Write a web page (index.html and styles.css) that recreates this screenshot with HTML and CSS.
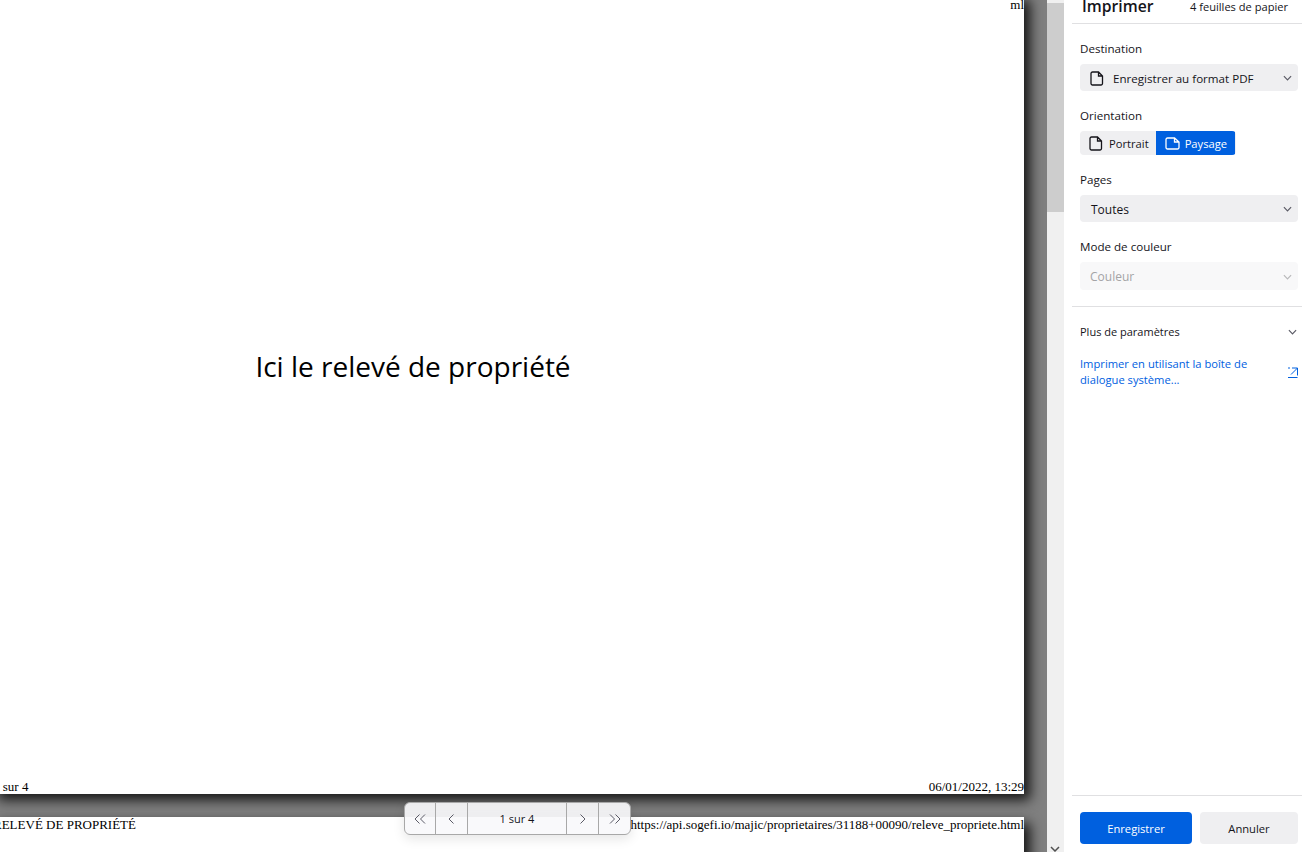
FILE: index.html
```html
<!DOCTYPE html>
<html lang="fr">
<head>
    <meta charset="UTF-8">
    <meta name="viewport" content="width=device-width, initial-scale=1.0">
    <title>Imprimer</title>
    <link rel="stylesheet" href="styles.css">
</head>
<body>
    <div class="preview">
        <div class="sheets">
            <div class="sheet">
                <div class="sheet-top">ml</div>
                <div class="sheet-body">Ici le relevé de propriété</div>
                <div class="sheet-line">
                    <span>1 sur 4</span>
                    <span>06/01/2022, 13:29</span>
                </div>
            </div>
            <div class="sheet">
                <div class="sheet-line">
                    <span>RELEVÉ DE PROPRIÉTÉ</span>
                    <span>https://api.sogefi.io/majic/proprietaires/31188+00090/releve_propriete.html</span>
                </div>
            </div>
        </div>
        <div class="scrollbar">
            <div class="scroll-thumb"></div>
            <svg class="scroll-down" width="10" height="6" viewBox="0 0 10 6"><path d="M1 1l4 4 4-4" fill="none" stroke="#505050" stroke-width="1.5"/></svg>
        </div>
        <div class="pager">
            <div class="pager-btn"><svg width="12" height="10" viewBox="0 0 12 10"><path d="M5.5 .5L1 5l4.5 4.5M11 .5L6.500 5l4.500 4.500" class="pager-ico"/></svg></div>
            <div class="pager-btn"><svg width="7" height="10" viewBox="0 0 7 10"><path d="M5.500 .5L1 5l4.500 4.500" class="pager-ico"/></svg></div>
            <div class="pager-num">1 sur 4</div>
            <div class="pager-btn"><svg width="7" height="10" viewBox="0 0 7 10"><path d="M1.500 .5L6 5l-4.500 4.500" class="pager-ico"/></svg></div>
            <div class="pager-btn"><svg width="12" height="10" viewBox="0 0 12 10"><path d="M1 .5L5.500 5 1 9.500M6.500 .5L11 5l-4.500 4.500" class="pager-ico"/></svg></div>
        </div>
    </div>

    <div class="panel">
        <div class="panel-head">
            <h1>Imprimer</h1>
            <span>4 feuilles de papier</span>
        </div>
        <div class="panel-main">
            <div class="field">
                <div class="label">Destination</div>
                <div class="select select-dest">
                    <svg width="14" height="15" viewBox="0 0 14 15"><path d="M2.500 1h6l4 4v7.500a1.500 1.500 0 0 1-1.500 1.500H2.500A1.500 1.500 0 0 1 1 12.500v-10A1.500 1.500 0 0 1 2.500 1zM8.500 1v4h4" class="page-ico"/></svg>
                    <span>Enregistrer au format PDF</span>
                    <svg class="chev" width="9" height="6" viewBox="0 0 10 6"><path d="M1 1l4 4 4-4"/></svg>
                </div>
            </div>
            <div class="field">
                <div class="label">Orientation</div>
                <div class="toggle">
                    <div class="toggle-opt">
                        <svg width="14" height="15" viewBox="0 0 14 15"><path d="M2.500 1h6l4 4v7.500a1.500 1.500 0 0 1-1.500 1.500H2.500A1.500 1.500 0 0 1 1 12.500v-10A1.500 1.500 0 0 1 2.500 1zM8.500 1v4h4" class="page-ico"/></svg>
                        Portrait
                    </div>
                    <div class="toggle-opt on">
                        <svg width="15" height="13" viewBox="0 0 15 13"><path d="M2.500 1h7l4.500 4v5.500a1.500 1.500 0 0 1-1.500 1.500h-10A1.500 1.500 0 0 1 1 10.500v-8A1.500 1.500 0 0 1 2.500 1zM9.500 1v4H14" class="page-ico"/></svg>
                        Paysage
                    </div>
                </div>
            </div>
            <div class="field">
                <div class="label">Pages</div>
                <div class="select">
                    <span>Toutes</span>
                    <svg class="chev" width="9" height="6" viewBox="0 0 10 6"><path d="M1 1l4 4 4-4"/></svg>
                </div>
            </div>
            <div class="field">
                <div class="label">Mode de couleur</div>
                <div class="select disabled">
                    <span>Couleur</span>
                    <svg class="chev" width="9" height="6" viewBox="0 0 10 6"><path d="M1 1l4 4 4-4"/></svg>
                </div>
            </div>
        </div>
        <div class="more">
            <span>Plus de paramètres</span>
            <svg class="chev" width="9" height="6" viewBox="0 0 10 6"><path d="M1 1l4 4 4-4"/></svg>
        </div>
        <div class="system">
            <span>Imprimer en utilisant la boîte de dialogue système...</span>
            <svg width="10" height="11" viewBox="0 0 10 11"><path d="M0 10.500h9.500M9.500 8.500V1H4M9.500 1L3 7.500M0 1h2" fill="none" stroke="#0060df"/></svg>
        </div>
        <div class="panel-foot">
            <button class="btn btn-main">Enregistrer</button>
            <button class="btn">Annuler</button>
        </div>
    </div>
</body>
</html>
```

FILE: styles.css
```css
html, body {
    height: 100%;
}
body {
    margin: 0;
    height: 852px;
    display: flex;
    overflow: hidden;
    font-family: "Open Sans", sans-serif;
    font-size: 12px;
    color: #15141a;
    background: #fff;
}

/* preview */
.preview {
    position: relative;
    width: 1064px;
    flex: none;
    display: flex;
    justify-content: space-between;
    background: #808080;
    overflow: hidden;
}
.sheets {
    width: 1032px;
    margin-left: -8px;
    margin-top: -6px;
    display: flex;
    flex-direction: column;
    gap: 23px;
    flex: none;
}
.sheet {
    flex: none;
    height: 800px;
    background: #fff;
    box-shadow: 6px 6px 12px rgba(0,0,0,0.85);
    display: flex;
    flex-direction: column;
    font-family: "Liberation Serif", serif;
    font-size: 13px;
    color: #000;
}
.sheet-top {
    text-align: right;
    line-height: 15px;
    padding-top: 3px;
}
.sheet-body {
    flex: 1;
    display: flex;
    align-items: center;
    justify-content: center;
    padding-bottom: 60px;
    padding-right: 190px;
    font-family: "Open Sans", sans-serif;
    font-size: 28px;
}
.sheet-line {
    display: flex;
    justify-content: space-between;
    line-height: 15px;
    padding-left: 1px;
}
.scrollbar {
    position: relative;
    width: 17px;
    flex: none;
    background: #f0f0f0;
}
.scroll-thumb {
    height: 209px;
    margin-top: 3px;
    background: #cdcdcd;
}
.scroll-down {
    position: absolute;
    left: 3px;
    bottom: 0;
}

/* pager over the sheets */
.pager {
    position: absolute;
    left: 404px;
    top: 802px;
    height: 33px;
    display: flex;
    border-radius: 6px;
    border: 1px solid #a8a8a8;
    overflow: hidden;
    background: rgba(249,249,251,0.92);
    box-shadow: 0 4px 12px rgba(0,0,0,0.1);
    box-sizing: border-box;
}
.pager-btn {
    width: 31px;
    display: flex;
    align-items: center;
    justify-content: center;
    border-right: 1px solid #a8a8a8;
}
.pager-btn:first-child {
    width: 30px;
}
.pager-btn:last-child {
    border-right: none;
}
.pager-ico {
    fill: none;
    stroke: #5b5b66;
}
.pager-num {
    width: 98px;
    display: flex;
    align-items: center;
    justify-content: center;
    border-right: 1px solid #a8a8a8;
    font-size: 11px;
}

/* print panel */
.panel {
    flex: 1;
    display: flex;
    flex-direction: column;
    padding-left: 8px;
    min-width: 0;
}
.panel-head {
    display: flex;
    justify-content: space-between;
    align-items: center;
    height: 28px;
    margin-top: -8px;
    padding: 0 14px 3px 10px;
    border-bottom: 1px solid #e0e0e2;
    flex: none;
    font-size: 11.100px;
}
.panel-head h1 {
    margin: 0;
    font-size: 15.700px;
    font-weight: 600;
}
.panel-main {
    padding: 16px 4px 16px 8px;
    border-bottom: 1px solid #e0e0e2;
}
.field {
    margin-bottom: 16px;
}
.field:last-child {
    margin-bottom: 0;
}
.label {
    font-size: 11.600px;
    line-height: 17px;
    margin-bottom: 7px;
}
.select {
    display: flex;
    align-items: center;
    box-sizing: border-box;
    height: 27px;
    padding: 1px 6px 0 11px;
    border-radius: 4px;
    background: #efeff1;
}
.select span {
    flex: 1;
}
.select-dest {
    font-size: 11.600px;
}
.select-dest svg:first-child {
    margin-right: 9px;
    margin-left: -1px;
}
.disabled {
    height: 28px;
    padding-left: 10px;
    background: #f8f8f9;
    color: #a4a4a6;
}
.disabled .chev path {
    stroke: #b8b8ba;
}
.chev path {
    fill: none;
    stroke: #5b5b66;
    stroke-width: 1.300;
}
.toggle {
    display: flex;
    height: 24px;
    width: 156px;
    border-radius: 4px;
    overflow: hidden;
    background: #efeff1;
    font-size: 11.200px;
}
.toggle-opt {
    flex: none;
    display: flex;
    align-items: center;
    gap: 6px;
    padding: 0 7px 0 9px;
}
.toggle-opt.on {
    gap: 5px;
    padding-right: 8px;
    background: #0060df;
    color: #fff;
}
.page-ico {
    fill: none;
    stroke: currentColor;
    stroke-width: 1.300;
}
.more {
    display: flex;
    align-items: center;
    justify-content: space-between;
    padding: 16px 5px 0 8px;
    line-height: 17px;
    font-size: 11px;
}
.system {
    display: flex;
    align-items: center;
    justify-content: space-between;
    padding: 16px 4px 0 8px;
    color: #0060df;
    line-height: 16px;
    font-size: 11.200px;
}
.system span {
    width: 180px;
}
.panel-foot {
    margin-top: auto;
    display: flex;
    gap: 8px;
    padding: 16px 4px 8px 8px;
    border-top: 1px solid #e0e0e2;
}
.btn {
    flex: 1;
    height: 32px;
    border: none;
    border-radius: 4px;
    background: #efeff1;
    color: #15141a;
    font-family: "Open Sans", sans-serif;
    font-size: 11.200px;
    padding: 0;
}
.btn-main {
    flex: none;
    width: 112px;
    background: #0060df;
    color: #fff;
}
```
